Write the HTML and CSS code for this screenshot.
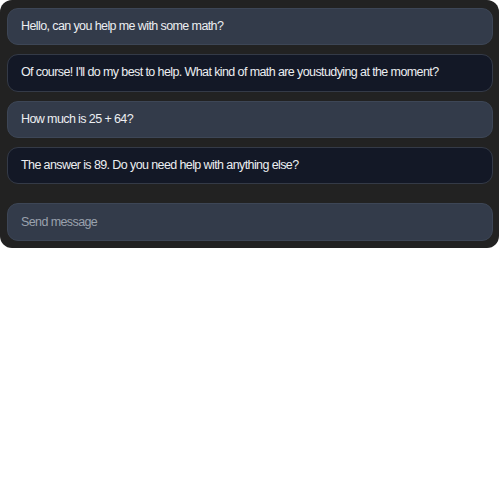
FILE: index.html
```html
<!DOCTYPE html>
<html lang="en">
<head>
    <meta charset="UTF-8">
    <meta name="viewport" content="width=device-width, initial-scale=1.0">
    <title>Chat</title>
    <link rel="stylesheet" href="styles.css">
</head>
<body>
<div class="chat">
    <div class="messages">
        <div class="message user">Hello, can you help me with some math?</div>
        <div class="message bot">Of course! I'll do my best to help. What kind of math are youstudying at the moment?</div>
        <div class="message user">How much is 25 + 64?</div>
        <div class="message bot">The answer is 89. Do you need help with anything else?</div>
    </div>
    <form class="composer">
        <input type="text" placeholder="Send message">
    </form>
</div>
</body>
</html>
```

FILE: styles.css
```css
body {
    margin: 0;
    background-color: #ffffff;
    font-family: "Liberation Sans", Arial, sans-serif;
}
.chat {
    background-color: #222222;
    border-radius: 12px;
    padding: 8px 6px 7px 7px;
    width: 486px;
}
.messages {
    display: flex;
    flex-direction: column;
    gap: 9px;
}
.message {
    padding: 10px 13px;
    border-radius: 11px;
    font-size: 12.5px;
    line-height: 15.33px;
    letter-spacing: -0.6px;
    color: #eceef1;
    border: 1px solid #3d4656;
}
.user {
    background-color: #333b4a;
}
.bot {
    background-color: #131826;
    border-color: #343a47;
}
.composer {
    margin-top: 19px;
}
.composer input {
    box-sizing: border-box;
    width: 100%;
    height: 38px;
    padding: 0 13px;
    border: 1px solid #3d4656;
    border-radius: 11px;
    background-color: #333b4a;
    color: #eceef1;
    font-family: inherit;
    font-size: 12.5px;
    letter-spacing: -0.6px;
    outline: none;
}
.composer input::placeholder {
    color: #9aa1ad;
}
```
